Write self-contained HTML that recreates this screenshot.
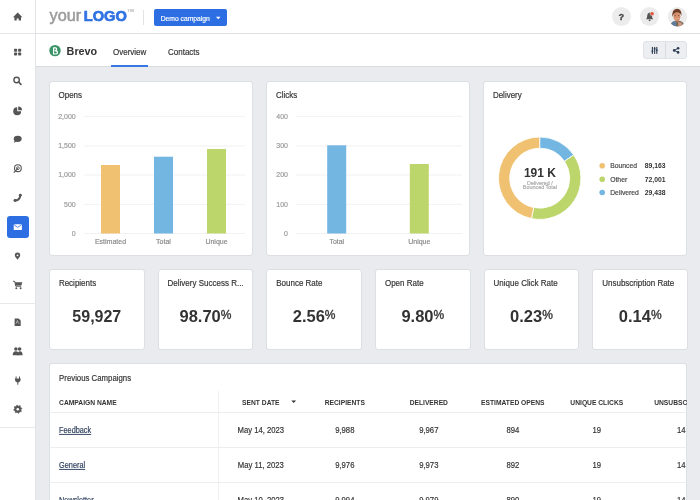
<!DOCTYPE html><html><head><meta charset="utf-8"><style>*{box-sizing:border-box;margin:0;padding:0}
html,body{width:700px;height:500px;overflow:hidden;background:#fff;font-family:"Liberation Sans",sans-serif;color:#333}
.a{position:absolute}
.card{position:absolute;background:#fff;border:1px solid #dcdfe3;border-radius:3px}
svg text{font-family:"Liberation Sans",sans-serif}
</style></head><body><div class="a" id="root" style="left:0;top:0;width:700px;height:500px;overflow:hidden;filter:blur(0.4px)"><div class="a" style="left:36px;top:67px;width:664px;height:433px;background:#e9ebee"></div>
<div class="a" style="left:35px;top:0;width:1px;height:500px;background:#e1e3e7"></div>
<div class="a" style="left:0;top:33px;width:35px;height:1px;background:#e6e8eb"></div>
<div class="a" style="left:0;top:303px;width:35px;height:1px;background:#e6e8eb"></div>
<div class="a" style="left:0;top:427px;width:35px;height:1px;background:#e6e8eb"></div>
<div class="a" style="left:36px;top:33px;width:664px;height:1px;background:#e0e1e4"></div>
<div class="a" style="left:36px;top:66px;width:664px;height:1px;background:#d9dce0"></div>
<div class="a" style="left:7px;top:216px;width:22px;height:22px;border-radius:3px;background:#2d6fe3"></div>
<div class="a" style="left:154px;top:9px;width:73px;height:17px;border-radius:2px;background:#2d6fe3"></div>
<div class="a" style="left:143px;top:10px;width:1px;height:15px;background:#e3e3e3"></div>
<div class="a" style="left:611.7px;top:7.4px;width:19px;height:19px;border-radius:50%;background:#ececec"></div>
<div class="a" style="left:639.8px;top:7.4px;width:19px;height:19px;border-radius:50%;background:#ececec"></div>
<div class="a" style="left:667.8px;top:7.4px;width:19px;height:19px;border-radius:50%;background:#ececec"></div>
<div class="a" style="left:111px;top:65px;width:37px;height:2px;background:#3578e4"></div>
<div class="a" style="left:643px;top:41.2px;width:43.8px;height:17.5px;background:#eceef1;border:1px solid #dfe2e6;border-radius:3px"></div>
<div class="a" style="left:664.6px;top:42px;width:1px;height:16px;background:#d8dbe0"></div>
<div class="card" style="left:49px;top:80.5px;width:204px;height:175.7px"></div>
<div class="card" style="left:266px;top:80.5px;width:204px;height:175.7px"></div>
<div class="card" style="left:483px;top:80.5px;width:204px;height:175.7px"></div>
<div class="card" style="left:49.0px;top:269.2px;width:95.67px;height:81.2px"></div>
<div class="card" style="left:157.67px;top:269.2px;width:95.67px;height:81.2px"></div>
<div class="card" style="left:266.34px;top:269.2px;width:95.67px;height:81.2px"></div>
<div class="card" style="left:375.01px;top:269.2px;width:95.67px;height:81.2px"></div>
<div class="card" style="left:483.68px;top:269.2px;width:95.67px;height:81.2px"></div>
<div class="card" style="left:592.35px;top:269.2px;width:95.67px;height:81.2px"></div>
<div class="card" style="left:49px;top:363.3px;width:638px;height:160px"></div><svg class="a" style="left:0;top:0" width="700" height="500" viewBox="0 0 700 500"><text x="49.6" y="21.1" font-size="16.3" fill="#9b9b9b" text-anchor="start" font-weight="normal"  stroke="#9b9b9b" stroke-width="0.5">your</text><text x="83.8" y="21" font-size="14.6" fill="#2f72e4" text-anchor="start" font-weight="bold"  stroke="#2f72e4" stroke-width="0.7">LOGO</text><text x="127.6" y="11.6" font-size="4.2" fill="#b5b5b5" text-anchor="start" font-weight="normal" stroke="#b5b5b5" stroke-width="0.18" >TM</text><text x="160.7" y="20.8" font-size="7.56" fill="#fff" text-anchor="start" font-weight="normal" textLength="49.15" lengthAdjust="spacingAndGlyphs" stroke="#fff" stroke-width="0.18" >Demo campaign</text><path d="M215.9 16.8 L220.5 16.8 L218.2 19.2 Z" fill="#fff"/><text x="621.4" y="20.2" font-size="9.2" fill="#444" text-anchor="middle" font-weight="bold"  stroke="#444" stroke-width="0.3">?</text><circle cx="55" cy="50.6" r="5.7" fill="#3a9468"/><path d="M53.6 47.8 L55.6 47.8 Q56.6 47.8 56.6 48.9 Q56.6 50.1 55.2 50.6 Q57.5 50.8 57.5 52.4 Q57.5 54 55.6 54 L53.6 54 Z" fill="none" stroke="#fff" stroke-width="1.2" stroke-linejoin="round"/><text x="66.6" y="54.7" font-size="10.8" fill="#333" text-anchor="start" font-weight="bold"  >Brevo</text><text x="113" y="54.7" font-size="8.96" fill="#333" text-anchor="start" font-weight="normal" textLength="33.34" lengthAdjust="spacingAndGlyphs" stroke="#333" stroke-width="0.18" >Overview</text><text x="168" y="54.7" font-size="8.96" fill="#333" text-anchor="start" font-weight="normal" textLength="31.57" lengthAdjust="spacingAndGlyphs" stroke="#333" stroke-width="0.18" >Contacts</text><rect x="84" y="115.9" width="161" height="1" fill="#f2f2f2"/><rect x="296" y="115.9" width="166" height="1" fill="#f2f2f2"/><rect x="84" y="145.5" width="161" height="1" fill="#f2f2f2"/><rect x="296" y="145.5" width="166" height="1" fill="#f2f2f2"/><rect x="84" y="174.5" width="161" height="1" fill="#f2f2f2"/><rect x="296" y="174.5" width="166" height="1" fill="#f2f2f2"/><rect x="84" y="203.9" width="161" height="1" fill="#f2f2f2"/><rect x="296" y="203.9" width="166" height="1" fill="#f2f2f2"/><rect x="84" y="233.0" width="161" height="1" fill="#f2f2f2"/><rect x="296" y="233.0" width="166" height="1" fill="#f2f2f2"/><text x="75.7" y="118.5" font-size="7.84" fill="#999" text-anchor="end" font-weight="normal" textLength="17.52" lengthAdjust="spacingAndGlyphs" stroke="#999" stroke-width="0.18" >2,000</text><text x="75.7" y="148.1" font-size="7.84" fill="#999" text-anchor="end" font-weight="normal" textLength="17.52" lengthAdjust="spacingAndGlyphs" stroke="#999" stroke-width="0.18" >1,500</text><text x="75.7" y="177.1" font-size="7.84" fill="#999" text-anchor="end" font-weight="normal" textLength="17.52" lengthAdjust="spacingAndGlyphs" stroke="#999" stroke-width="0.18" >1,000</text><text x="75.7" y="206.5" font-size="7.84" fill="#999" text-anchor="end" font-weight="normal" textLength="11.68" lengthAdjust="spacingAndGlyphs" stroke="#999" stroke-width="0.18" >500</text><text x="75.7" y="235.6" font-size="7.84" fill="#999" text-anchor="end" font-weight="normal" textLength="3.89" lengthAdjust="spacingAndGlyphs" stroke="#999" stroke-width="0.18" >0</text><text x="288" y="118.5" font-size="7.84" fill="#999" text-anchor="end" font-weight="normal" textLength="11.68" lengthAdjust="spacingAndGlyphs" stroke="#999" stroke-width="0.18" >400</text><text x="288" y="148.1" font-size="7.84" fill="#999" text-anchor="end" font-weight="normal" textLength="11.68" lengthAdjust="spacingAndGlyphs" stroke="#999" stroke-width="0.18" >300</text><text x="288" y="177.1" font-size="7.84" fill="#999" text-anchor="end" font-weight="normal" textLength="11.68" lengthAdjust="spacingAndGlyphs" stroke="#999" stroke-width="0.18" >200</text><text x="288" y="206.5" font-size="7.84" fill="#999" text-anchor="end" font-weight="normal" textLength="11.68" lengthAdjust="spacingAndGlyphs" stroke="#999" stroke-width="0.18" >100</text><text x="288" y="235.6" font-size="7.84" fill="#999" text-anchor="end" font-weight="normal" textLength="3.89" lengthAdjust="spacingAndGlyphs" stroke="#999" stroke-width="0.18" >0</text><rect x="101" y="165" width="19" height="68.5" fill="#efc170"/><rect x="154" y="156.7" width="19" height="76.8" fill="#72b6e1"/><rect x="207" y="149" width="19" height="84.5" fill="#bdd66c"/><rect x="327.2" y="145.3" width="19" height="88.2" fill="#72b6e1"/><rect x="409.8" y="164" width="19" height="69.5" fill="#bdd66c"/><text x="110.5" y="244" font-size="7.84" fill="#888" text-anchor="middle" font-weight="normal" textLength="31.12" lengthAdjust="spacingAndGlyphs" stroke="#888" stroke-width="0.18" >Estimated</text><text x="163.5" y="244" font-size="7.84" fill="#888" text-anchor="middle" font-weight="normal" textLength="14.79" lengthAdjust="spacingAndGlyphs" stroke="#888" stroke-width="0.18" >Total</text><text x="216.5" y="244" font-size="7.84" fill="#888" text-anchor="middle" font-weight="normal" textLength="22.18" lengthAdjust="spacingAndGlyphs" stroke="#888" stroke-width="0.18" >Unique</text><text x="336.8" y="244" font-size="7.84" fill="#888" text-anchor="middle" font-weight="normal" textLength="14.79" lengthAdjust="spacingAndGlyphs" stroke="#888" stroke-width="0.18" >Total</text><text x="419.3" y="244" font-size="7.84" fill="#888" text-anchor="middle" font-weight="normal" textLength="22.18" lengthAdjust="spacingAndGlyphs" stroke="#888" stroke-width="0.18" >Unique</text><text x="58.5" y="97.7" font-size="8.96" fill="#333" text-anchor="start" font-weight="normal" textLength="23.57" lengthAdjust="spacingAndGlyphs" stroke="#333" stroke-width="0.18" >Opens</text><text x="276" y="97.7" font-size="8.96" fill="#333" text-anchor="start" font-weight="normal" textLength="21.33" lengthAdjust="spacingAndGlyphs" stroke="#333" stroke-width="0.18" >Clicks</text><text x="492.9" y="97.7" font-size="8.96" fill="#333" text-anchor="start" font-weight="normal" textLength="28.89" lengthAdjust="spacingAndGlyphs" stroke="#333" stroke-width="0.18" >Delivery</text><path d="M539.70 137.00 A41.2 41.2 0 0 1 573.70 154.92 L564.45 161.25 A30.0 30.0 0 0 0 539.70 148.20 Z" fill="#72b6e1" stroke="#fff" stroke-width="0.8"/><path d="M573.70 154.92 A41.2 41.2 0 0 1 531.42 218.56 L533.67 207.59 A30.0 30.0 0 0 0 564.45 161.25 Z" fill="#bdd66c" stroke="#fff" stroke-width="0.8"/><path d="M531.42 218.56 A41.2 41.2 0 0 1 539.70 137.00 L539.70 148.20 A30.0 30.0 0 0 0 533.67 207.59 Z" fill="#efc170" stroke="#fff" stroke-width="0.8"/><text x="539.9" y="176.8" font-size="12" fill="#333" text-anchor="middle" font-weight="bold"  >191 K</text><text x="539.9" y="184.7" font-size="6.05" fill="#aaa" text-anchor="middle" font-weight="normal" textLength="25.81" lengthAdjust="spacingAndGlyphs" stroke="#aaa" stroke-width="0.18" >Delivered /</text><text x="539.9" y="189.4" font-size="6.05" fill="#aaa" text-anchor="middle" font-weight="normal" textLength="34.13" lengthAdjust="spacingAndGlyphs" stroke="#aaa" stroke-width="0.18" >Bounced Total</text><circle cx="602.2" cy="165.7" r="2.8" fill="#efc170"/><text x="610.2" y="168.1" font-size="7.62" fill="#444" text-anchor="start" font-weight="normal" textLength="26.84" lengthAdjust="spacingAndGlyphs" stroke="#444" stroke-width="0.18" >Bounced</text><text x="644.7" y="168.1" font-size="7.62" fill="#333" text-anchor="start" font-weight="bold" textLength="20.80" lengthAdjust="spacingAndGlyphs"  >89,163</text><circle cx="602.2" cy="179.3" r="2.8" fill="#bdd66c"/><text x="610.2" y="181.70000000000002" font-size="7.62" fill="#444" text-anchor="start" font-weight="normal" textLength="17.01" lengthAdjust="spacingAndGlyphs" stroke="#444" stroke-width="0.18" >Other</text><text x="644.7" y="181.70000000000002" font-size="7.62" fill="#333" text-anchor="start" font-weight="bold" textLength="20.80" lengthAdjust="spacingAndGlyphs"  >72,001</text><circle cx="602.2" cy="192.5" r="2.8" fill="#72b6e1"/><text x="610.2" y="194.9" font-size="7.62" fill="#444" text-anchor="start" font-weight="normal" textLength="28.72" lengthAdjust="spacingAndGlyphs" stroke="#444" stroke-width="0.18" >Delivered</text><text x="644.7" y="194.9" font-size="7.62" fill="#333" text-anchor="start" font-weight="bold" textLength="20.80" lengthAdjust="spacingAndGlyphs"  >29,438</text><text x="58.9" y="286.2" font-size="8.96" fill="#333" text-anchor="start" font-weight="normal" textLength="37.35" lengthAdjust="spacingAndGlyphs" stroke="#333" stroke-width="0.18" >Recipients</text><text x="96.8" y="322.2" font-size="16" fill="#333" text-anchor="middle" font-weight="bold"  >59,927</text><text x="167.57" y="286.2" font-size="8.96" fill="#333" text-anchor="start" font-weight="normal" textLength="76.02" lengthAdjust="spacingAndGlyphs" stroke="#333" stroke-width="0.18" >Delivery Success R...</text><text x="205.46999999999997" y="322.2" font-size="16.5" fill="#333" text-anchor="middle" font-weight="bold">98.70<tspan font-size="12" font-weight="normal" stroke="#333" stroke-width="0.35" dy="-2.9">%</tspan></text><text x="276.23999999999995" y="286.2" font-size="8.96" fill="#333" text-anchor="start" font-weight="normal" textLength="46.25" lengthAdjust="spacingAndGlyphs" stroke="#333" stroke-width="0.18" >Bounce Rate</text><text x="314.14" y="322.2" font-size="16.5" fill="#333" text-anchor="middle" font-weight="bold">2.56<tspan font-size="12" font-weight="normal" stroke="#333" stroke-width="0.35" dy="-2.9">%</tspan></text><text x="384.90999999999997" y="286.2" font-size="8.96" fill="#333" text-anchor="start" font-weight="normal" textLength="38.69" lengthAdjust="spacingAndGlyphs" stroke="#333" stroke-width="0.18" >Open Rate</text><text x="422.81" y="322.2" font-size="16.5" fill="#333" text-anchor="middle" font-weight="bold">9.80<tspan font-size="12" font-weight="normal" stroke="#333" stroke-width="0.35" dy="-2.9">%</tspan></text><text x="493.58" y="286.2" font-size="8.96" fill="#333" text-anchor="start" font-weight="normal" textLength="64.03" lengthAdjust="spacingAndGlyphs" stroke="#333" stroke-width="0.18" >Unique Click Rate</text><text x="531.48" y="322.2" font-size="16.5" fill="#333" text-anchor="middle" font-weight="bold">0.23<tspan font-size="12" font-weight="normal" stroke="#333" stroke-width="0.35" dy="-2.9">%</tspan></text><text x="602.25" y="286.2" font-size="8.96" fill="#333" text-anchor="start" font-weight="normal" textLength="72.04" lengthAdjust="spacingAndGlyphs" stroke="#333" stroke-width="0.18" >Unsubscription Rate</text><text x="640.15" y="322.2" font-size="16.5" fill="#333" text-anchor="middle" font-weight="bold">0.14<tspan font-size="12" font-weight="normal" stroke="#333" stroke-width="0.35" dy="-2.9">%</tspan></text><text x="59.1" y="380.8" font-size="8.74" fill="#333" text-anchor="start" font-weight="normal" textLength="71.97" lengthAdjust="spacingAndGlyphs" stroke="#333" stroke-width="0.18" >Previous Campaigns</text><rect x="218" y="391" width="1" height="120" fill="#f0f0f0"/><rect x="50.5" y="412.0" width="635" height="1" fill="#ededed"/><rect x="50.5" y="447.0" width="635" height="1" fill="#ededed"/><rect x="50.5" y="482.0" width="635" height="1" fill="#ededed"/><text x="59.1" y="404.7" font-size="7.50" fill="#333" text-anchor="start" font-weight="bold" textLength="57.57" lengthAdjust="spacingAndGlyphs"  >CAMPAIGN NAME</text><text x="260.8" y="404.7" font-size="7.50" fill="#333" text-anchor="middle" font-weight="bold" textLength="37.47" lengthAdjust="spacingAndGlyphs"  >SENT DATE</text><text x="344.8" y="404.7" font-size="7.50" fill="#333" text-anchor="middle" font-weight="bold" textLength="40.21" lengthAdjust="spacingAndGlyphs"  >RECIPIENTS</text><text x="428.8" y="404.7" font-size="7.50" fill="#333" text-anchor="middle" font-weight="bold" textLength="38.35" lengthAdjust="spacingAndGlyphs"  >DELIVERED</text><text x="512.8" y="404.7" font-size="7.50" fill="#333" text-anchor="middle" font-weight="bold" textLength="63.53" lengthAdjust="spacingAndGlyphs"  >ESTIMATED OPENS</text><text x="596.8" y="404.7" font-size="7.50" fill="#333" text-anchor="middle" font-weight="bold" textLength="52.86" lengthAdjust="spacingAndGlyphs"  >UNIQUE CLICKS</text><text x="654.2" y="404.7" font-size="7.50" fill="#333" text-anchor="start" font-weight="bold" textLength="53.61" lengthAdjust="spacingAndGlyphs"  >UNSUBSCRIBES</text><path d="M291.3 400.4 L296.1 400.4 L293.7 403 Z" fill="#333"/><text x="59.1" y="433" font-size="8.18" fill="#2c3e5c" text-anchor="start" font-weight="normal" textLength="32.06" lengthAdjust="spacingAndGlyphs" stroke="#2c3e5c" stroke-width="0.18" text-decoration="underline">Feedback</text><text x="260.8" y="433" font-size="8.62" fill="#333" text-anchor="middle" font-weight="normal" textLength="46.66" lengthAdjust="spacingAndGlyphs" stroke="#333" stroke-width="0.18" >May 14, 2023</text><text x="344.8" y="433" font-size="8.62" fill="#333" text-anchor="middle" font-weight="normal" textLength="19.27" lengthAdjust="spacingAndGlyphs" stroke="#333" stroke-width="0.18" >9,988</text><text x="428.8" y="433" font-size="8.62" fill="#333" text-anchor="middle" font-weight="normal" textLength="19.27" lengthAdjust="spacingAndGlyphs" stroke="#333" stroke-width="0.18" >9,967</text><text x="512.8" y="433" font-size="8.62" fill="#333" text-anchor="middle" font-weight="normal" textLength="12.85" lengthAdjust="spacingAndGlyphs" stroke="#333" stroke-width="0.18" >894</text><text x="596.8" y="433" font-size="8.62" fill="#333" text-anchor="middle" font-weight="normal" textLength="8.56" lengthAdjust="spacingAndGlyphs" stroke="#333" stroke-width="0.18" >19</text><text x="677" y="433" font-size="8.62" fill="#333" text-anchor="start" font-weight="normal" textLength="8.56" lengthAdjust="spacingAndGlyphs" stroke="#333" stroke-width="0.18" >14</text><text x="59.1" y="468" font-size="8.18" fill="#2c3e5c" text-anchor="start" font-weight="normal" textLength="25.97" lengthAdjust="spacingAndGlyphs" stroke="#2c3e5c" stroke-width="0.18" text-decoration="underline">General</text><text x="260.8" y="468" font-size="8.62" fill="#333" text-anchor="middle" font-weight="normal" textLength="46.09" lengthAdjust="spacingAndGlyphs" stroke="#333" stroke-width="0.18" >May 11, 2023</text><text x="344.8" y="468" font-size="8.62" fill="#333" text-anchor="middle" font-weight="normal" textLength="19.27" lengthAdjust="spacingAndGlyphs" stroke="#333" stroke-width="0.18" >9,976</text><text x="428.8" y="468" font-size="8.62" fill="#333" text-anchor="middle" font-weight="normal" textLength="19.27" lengthAdjust="spacingAndGlyphs" stroke="#333" stroke-width="0.18" >9,973</text><text x="512.8" y="468" font-size="8.62" fill="#333" text-anchor="middle" font-weight="normal" textLength="12.85" lengthAdjust="spacingAndGlyphs" stroke="#333" stroke-width="0.18" >892</text><text x="596.8" y="468" font-size="8.62" fill="#333" text-anchor="middle" font-weight="normal" textLength="8.56" lengthAdjust="spacingAndGlyphs" stroke="#333" stroke-width="0.18" >19</text><text x="677" y="468" font-size="8.62" fill="#333" text-anchor="start" font-weight="normal" textLength="8.56" lengthAdjust="spacingAndGlyphs" stroke="#333" stroke-width="0.18" >14</text><text x="59.1" y="503" font-size="8.18" fill="#2c3e5c" text-anchor="start" font-weight="normal" textLength="34.48" lengthAdjust="spacingAndGlyphs" stroke="#2c3e5c" stroke-width="0.18" text-decoration="underline">Newsletter</text><text x="260.8" y="503" font-size="8.62" fill="#333" text-anchor="middle" font-weight="normal" textLength="46.66" lengthAdjust="spacingAndGlyphs" stroke="#333" stroke-width="0.18" >May 10, 2023</text><text x="344.8" y="503" font-size="8.62" fill="#333" text-anchor="middle" font-weight="normal" textLength="19.27" lengthAdjust="spacingAndGlyphs" stroke="#333" stroke-width="0.18" >9,994</text><text x="428.8" y="503" font-size="8.62" fill="#333" text-anchor="middle" font-weight="normal" textLength="19.27" lengthAdjust="spacingAndGlyphs" stroke="#333" stroke-width="0.18" >9,979</text><text x="512.8" y="503" font-size="8.62" fill="#333" text-anchor="middle" font-weight="normal" textLength="12.85" lengthAdjust="spacingAndGlyphs" stroke="#333" stroke-width="0.18" >890</text><text x="596.8" y="503" font-size="8.62" fill="#333" text-anchor="middle" font-weight="normal" textLength="8.56" lengthAdjust="spacingAndGlyphs" stroke="#333" stroke-width="0.18" >19</text><text x="677" y="503" font-size="8.62" fill="#333" text-anchor="start" font-weight="normal" textLength="8.56" lengthAdjust="spacingAndGlyphs" stroke="#333" stroke-width="0.18" >14</text><path d="M13 17.2 L17.7 12.4 L22.4 17.2 L21 17.2 L21 20.6 L18.7 20.6 L18.7 18.4 L16.7 18.4 L16.7 20.6 L14.4 20.6 L14.4 17.2 Z" fill="#555"/><rect x="14" y="48.8" width="3.1" height="2.9" rx="0.7" fill="#555"/><rect x="14" y="52.5" width="3.1" height="2.9" rx="0.7" fill="#555"/><rect x="18.1" y="48.8" width="3.1" height="2.9" rx="0.7" fill="#555"/><rect x="18.1" y="52.5" width="3.1" height="2.9" rx="0.7" fill="#555"/><circle cx="16.6" cy="80" r="2.7" fill="none" stroke="#555" stroke-width="1.4"/><path d="M18.6 82 L20.9 84.3" stroke="#555" stroke-width="1.7" stroke-linecap="round"/><path d="M17.2 111.3 L17.2 107.3 A4 4 0 1 0 21.2 111.3 Z" fill="#555"/><path d="M18.2 110.3 L18.2 106.4 A3.9 3.9 0 0 1 22.1 110.3 Z" fill="#555"/><ellipse cx="17.7" cy="138.8" rx="4" ry="3.1" fill="#555"/><path d="M14.8 140.3 L13.9 142.7 L16.8 141.5 Z" fill="#555"/><circle cx="17.9" cy="168.2" r="3.4" fill="none" stroke="#555" stroke-width="1.1"/><circle cx="17.9" cy="168.2" r="1.4" fill="none" stroke="#555" stroke-width="0.9"/><path d="M14.1 172.3 L17.6 168.6" stroke="#555" stroke-width="1.1" stroke-linecap="round"/><path d="M14.8 200.6 Q19.8 200.6 20.4 195.2" stroke="#555" stroke-width="2" fill="none" stroke-linecap="round"/><circle cx="15" cy="200.5" r="1.45" fill="#555"/><circle cx="20.3" cy="195.3" r="1.45" fill="#555"/><rect x="13.7" y="224.2" width="8.2" height="5.9" rx="0.6" fill="#fff"/><path d="M13.9 224.6 L17.8 227.4 L21.7 224.6" stroke="#2d6fe3" stroke-width="0.8" fill="none"/><path d="M17.5 259.8 C16 257.6 14.8 256.5 14.8 255.3 A2.7 2.7 0 0 1 20.2 255.3 C20.2 256.5 19 257.6 17.5 259.8 Z" fill="#555"/><circle cx="17.5" cy="255.3" r="0.9" fill="#fff"/><path d="M13 281.3 L14.7 281.3 L15.8 286.2 L21.2 286.2" stroke="#555" stroke-width="1" fill="none"/><path d="M14.9 282.2 L22.3 282.2 L21.4 285.6 L15.7 285.6 Z" fill="#555"/><circle cx="16.3" cy="288.3" r="1" fill="#555"/><circle cx="20.6" cy="288.3" r="1" fill="#555"/><path d="M14.6 318.5 L18.6 318.5 L20.7 320.6 L20.7 326 L14.6 326 Z" fill="#555"/><path d="M16 323.6 Q17 321.5 17.4 320.5 Q17.8 322.5 19.3 323.8" stroke="#fff" stroke-width="0.5" fill="none"/><circle cx="15.9" cy="349" r="1.8" fill="#555"/><circle cx="19.6" cy="349" r="1.8" fill="#555"/><path d="M12.7 355.2 Q12.7 351.3 15.9 351.3 Q18.6 351.3 18.9 355.2 Z" fill="#555"/><path d="M17.5 355.2 Q17.5 351.3 19.9 351.3 Q22.6 351.3 22.6 355.2 Z" fill="#555"/><rect x="15.6" y="376.5" width="1" height="2.4" fill="#555"/><rect x="19" y="376.5" width="1" height="2.4" fill="#555"/><path d="M14.9 378.6 L20.7 378.6 L20.7 379.8 Q20.5 382 18.3 382.6 L18.3 384.8 L17.3 384.8 L17.3 382.6 Q15.1 382 14.9 379.8 Z" fill="#555"/><path d="M22.02 408.36 L20.84 409.80 L21.38 411.59 L19.52 411.78 L18.64 413.42 L17.20 412.24 L15.41 412.78 L15.22 410.92 L13.58 410.04 L14.76 408.60 L14.22 406.81 L16.08 406.62 L16.96 404.98 L18.40 406.16 L20.19 405.62 L20.38 407.48 Z" fill="#555" stroke="#555" stroke-width="0.6" stroke-linejoin="round"/><circle cx="17.8" cy="409.2" r="1.3" fill="#fff"/><path d="M646 19.3 Q647.2 18.2 647.2 15.8 Q647.2 13 649.6 12.6 Q652 13 652 15.8 Q652 18.2 653.2 19.3 Z" fill="#555"/><circle cx="649.6" cy="20.3" r="0.9" fill="#555"/><circle cx="652.1" cy="13.7" r="2" fill="#e0533f" stroke="#ececec" stroke-width="0.5"/><clipPath id="av"><circle cx="677.5" cy="16.8" r="9.6"/></clipPath><g clip-path="url(#av)"><circle cx="677.5" cy="16.8" r="9.6" fill="#ececec"/><path d="M670.2 27 Q670.8 22.2 674.6 21 L680.4 21 Q683.8 22.2 684.6 27 Z" fill="#7a6558"/><path d="M670.2 27 Q670.8 22.2 674.6 21 L676.5 21 L676 27 Z" fill="#5e7f9e"/><path d="M678 22 L681.5 22.5 L682.5 26 L678.5 27 Z" fill="#c99a80"/><rect x="675.4" y="18.8" width="3.8" height="3" fill="#b87558"/><ellipse cx="676.9" cy="16.2" rx="3.5" ry="4.9" fill="#d4906c"/><path d="M672.4 17 Q671.6 9.2 676.9 8.7 Q682.2 9 681.4 16.2 Q680.8 12.6 677 12.3 Q673.6 12.5 672.4 17 Z" fill="#6e3d27"/><path d="M675 18.3 Q677 19.6 679 18.3" stroke="#e6bda5" stroke-width="0.6" fill="none"/><rect x="674.6" y="15.1" width="1.2" height="0.6" fill="#5a3322"/><rect x="678" y="15.1" width="1.2" height="0.6" fill="#5a3322"/></g><rect x="651.8" y="46.9" width="1.2" height="7" fill="#3d4d63"/><rect x="651.55" y="50.5" width="1.7" height="1.4" fill="#2a3b52"/><rect x="654.0" y="46.9" width="1.2" height="7" fill="#3d4d63"/><rect x="653.75" y="48.099999999999994" width="1.7" height="1.4" fill="#2a3b52"/><rect x="656.1999999999999" y="46.9" width="1.2" height="7" fill="#3d4d63"/><rect x="655.9499999999999" y="49.5" width="1.7" height="1.4" fill="#2a3b52"/><path d="M674.2 50.4 L678.2 48.3 M674.2 50.4 L678.2 52.4" stroke="#2a3b52" stroke-width="0.9"/><circle cx="674.2" cy="50.4" r="1.3" fill="#2a3b52"/><circle cx="678.1" cy="48.3" r="1.3" fill="#2a3b52"/><circle cx="678.1" cy="52.4" r="1.3" fill="#2a3b52"/></svg><div class="a" style="left:687px;top:363px;width:14px;height:137px;background:#e9ebee"></div></div></body></html>
